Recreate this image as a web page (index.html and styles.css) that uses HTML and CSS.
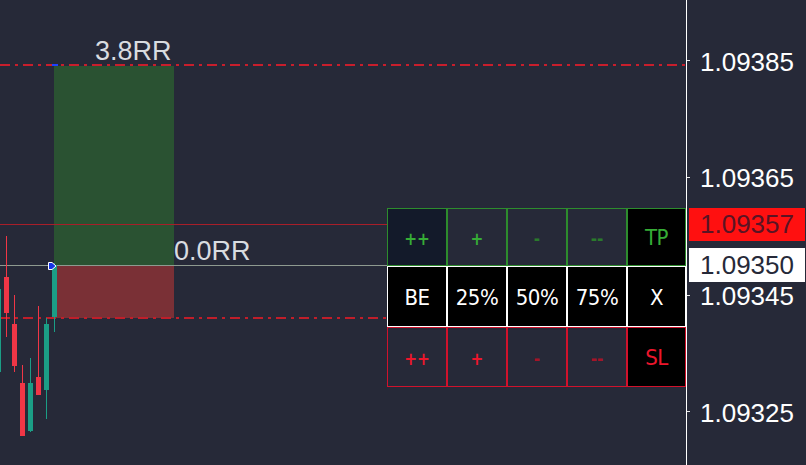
FILE: index.html
```html
<!DOCTYPE html>
<html>
<head>
<meta charset="utf-8">
<link rel="stylesheet" href="styles.css">
</head>
<body>
<div class="screen">
  <div class="chart">
    <svg class="drawing" width="686" height="465" viewBox="0 0 686 465" shape-rendering="crispEdges">
      <rect x="54" y="66" width="120" height="199" fill="#2a5232"/>
      <rect x="54" y="265" width="120" height="53" fill="#7a3036"/>
      <line x1="0" y1="65" x2="686" y2="65" stroke="#c81e2c" stroke-width="2" stroke-dasharray="10 5 3 5"/>
      <line x1="52" y1="65" x2="58" y2="65" stroke="#2040ff" stroke-width="2"/>
      <line x1="0" y1="224.5" x2="387" y2="224.5" stroke="#a81e29" stroke-width="1"/>
      <line x1="0" y1="265.5" x2="387" y2="265.5" stroke="#8e9a90" stroke-width="1"/>
      <line x1="0" y1="318" x2="387" y2="318" stroke="#c01e2a" stroke-width="2" stroke-dasharray="10 5 3 5"/>
      <g class="bull">
        <rect x="-4" y="289" width="5" height="83"/>
      </g>
      <g class="bear">
        <rect x="6" y="236" width="1" height="101"/>
        <rect x="4" y="277" width="5" height="36"/>
        <rect x="14" y="295" width="1" height="77"/>
        <rect x="12" y="324" width="5" height="42"/>
        <rect x="22" y="365" width="1" height="71"/>
        <rect x="20" y="383" width="5" height="53"/>
        <rect x="38" y="306" width="1" height="89"/>
        <rect x="36" y="377" width="5" height="18"/>
      </g>
      <g class="bull">
        <rect x="30" y="358" width="1" height="74"/>
        <rect x="28" y="383" width="5" height="48"/>
        <rect x="46" y="318" width="1" height="101"/>
        <rect x="44" y="324" width="5" height="66"/>
        <rect x="54" y="263" width="1" height="69"/>
        <rect x="52" y="265" width="5" height="52"/>
      </g>
      <path d="M48.5 262.5 h3.5 l4 3.5 l-4 3.5 h-3.5 z" fill="#1533e6" stroke="#ffffff" stroke-width="1" shape-rendering="auto"/>
    </svg>
    <div class="rr rr-top">3.8RR</div>
    <div class="rr rr-zero">0.0RR</div>

    <div class="panel">
      <div class="cell up first bold">++</div>
      <div class="cell up bold">+</div>
      <div class="cell up bold dim">-</div>
      <div class="cell up bold dim">--</div>
      <div class="cell up big black">TP</div>

      <div class="cell mid big">BE</div>
      <div class="cell mid big">25%</div>
      <div class="cell mid big">50%</div>
      <div class="cell mid big">75%</div>
      <div class="cell mid big">X</div>

      <div class="cell down bold">++</div>
      <div class="cell down bold">+</div>
      <div class="cell down bold dim">-</div>
      <div class="cell down bold dim">--</div>
      <div class="cell down big black">SL</div>
    </div>
  </div>

  <div class="axis">
    <div class="tick t1"></div>
    <div class="tick t2"></div>
    <div class="tick t3"></div>
    <div class="tick t4"></div>
    <div class="price p1">1.09385</div>
    <div class="price p2">1.09365</div>
    <div class="price tag-red">1.09357</div>
    <div class="price tag-white">1.09350</div>
    <div class="price p3">1.09345</div>
    <div class="price p4">1.09325</div>
  </div>
</div>
</body>
</html>
```

FILE: styles.css
```css
html, body {
  margin: 0;
  padding: 0;
  background: #262938;
  overflow: hidden;
}

.screen {
  display: flex;
  width: 806px;
  height: 465px;
  background: #262938;
}

.chart {
  position: relative;
  width: 686px;
  height: 465px;
  flex: none;
  overflow: hidden;
}

.drawing {
  position: absolute;
  left: 0;
  top: 0;
  display: block;
}

.bull rect { fill: #1b9e86; }
.bear rect { fill: #f03646; }

.rr {
  position: absolute;
  font-family: "Liberation Sans", Arial, sans-serif;
  font-size: 27px;
  line-height: 27px;
  color: #d9dce0;
  white-space: nowrap;
}
.rr-top { left: 95px; top: 38px; }
.rr-zero { left: 174px; top: 238px; }

.panel {
  position: absolute;
  left: 387px;
  top: 208px;
  display: grid;
  grid-template-columns: 60px 60px 60px 60px 59px;
  grid-template-rows: 58px 61px 60px;
}

.cell {
  box-sizing: border-box;
  border: 1px solid;
  display: flex;
  align-items: center;
  justify-content: center;
  font-family: "DejaVu Sans Condensed", "DejaVu Sans", sans-serif;
  font-stretch: condensed;
  white-space: nowrap;
}

.cell.bold {
  font-family: "DejaVu Sans", sans-serif;
  font-weight: bold;
  font-size: 17px;
  letter-spacing: 0;
  padding-top: 3px;
}

.cell.big {
  font-size: 22px;
  letter-spacing: -0.5px;
  padding-top: 1px;
}

.up {
  border-color: #2d8c2d;
  color: #36ad36;
}
.up.first { background: #131a2a; }
.up.dim { color: #2a7a2c; }

.mid {
  border-color: #ffffff;
  background: #000000;
  color: #ffffff;
}

.down {
  border-color: #d0122c;
  color: #ec162c;
}
.down.dim { color: #a51428; }

.black { background: #000000; }

.axis {
  position: relative;
  flex: 1;
  height: 465px;
  border-left: 1px solid #ffffff;
}

.tick {
  position: absolute;
  left: 0;
  width: 3px;
  height: 1px;
  background: #e8e8e8;
}
.t1 { top: 60px; }
.t2 { top: 177px; }
.t3 { top: 295px; }
.t4 { top: 411px; }

.price {
  position: absolute;
  left: 13px;
  font-family: "Liberation Sans", Arial, sans-serif;
  font-size: 26px;
  line-height: 26px;
  color: #ffffff;
  white-space: nowrap;
}
.p1 { top: 49px; }
.p2 { top: 165px; }
.p3 { top: 283px; }
.p4 { top: 400px; }

.tag-red,
.tag-white {
  left: 2px;
  width: 116px;
  padding-left: 11px;
  box-sizing: border-box;
}
.tag-red {
  top: 208px;
  height: 33px;
  line-height: 33px;
  background: #ff1010;
  color: #5a1424;
}
.tag-white {
  top: 248px;
  height: 34px;
  line-height: 34px;
  background: #ffffff;
  color: #262938;
}
```
